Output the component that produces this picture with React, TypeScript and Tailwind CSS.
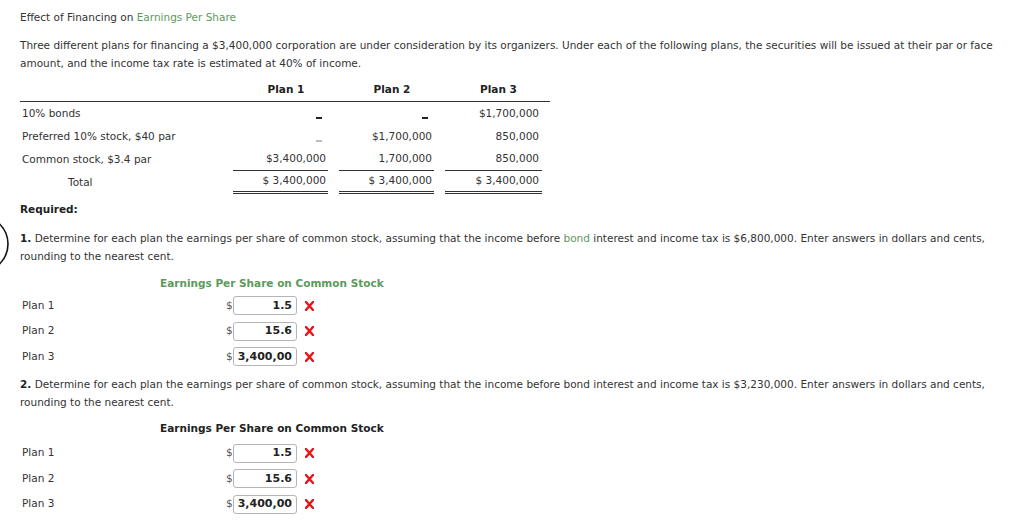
import type { ReactNode } from "react";

const green = "text-[#5c9a5c]";

function Dash({ light }: { light?: boolean }) {
   return (
      <span className={`inline-block w-[6px] h-[2px] mt-[8px] mr-[4px] ${light ? "bg-[#bbb]" : "bg-[#222]"}`} />
   );
}

function FinRow({
   label,
   cells,
   labelClass = "pl-[2px]",
   rowClass = "",
   cellClass = "",
}: {
   label: string;
   cells: ReactNode[];
   labelClass?: string;
   rowClass?: string;
   cellClass?: string;
}) {
   return (
      <div className={`flex h-[23px] items-center ${rowClass}`}>
         <div className={`w-[213px] ${labelClass}`}>{label}</div>
         <div className={`w-[95px] h-full flex items-center justify-end pr-[2px] ${cellClass}`}>{cells[0]}</div>
         <div className="w-[11px]" />
         <div className={`w-[95px] h-full flex items-center justify-end pr-[2px] ${cellClass}`}>{cells[1]}</div>
         <div className="w-[11px]" />
         <div className={`w-[97px] h-full flex items-center justify-end pr-[3px] ${cellClass}`}>{cells[2]}</div>
      </div>
   );
}

function XMark() {
   return (
      <svg width="9" height="10" viewBox="0 0 9 10" className="ml-[8px]">
         <path d="M1 1 L8 9 M8 1 L1 9" stroke="#e8161b" strokeWidth="2.4" strokeLinecap="square" />
      </svg>
   );
}

function EpsRow({ label, value }: { label: string; value: string }) {
   return (
      <div className="flex h-[25.5px] items-center">
         <div className="w-[206px] pl-[2px]">{label}</div>
         <span className="w-[7px] text-[#555]">$</span>
         <div className="w-[64px] h-[19px] border border-[#b5b5b5] rounded-[3px] bg-white flex items-center justify-end pr-[4px] text-[11px] font-bold text-[#222] overflow-hidden whitespace-nowrap">
            {value}
         </div>
         <XMark />
      </div>
   );
}

function EpsBlock({ headingClass, gap }: { headingClass: string; gap: string }) {
   return (
      <div>
         <div className={`leading-[18px] font-bold pl-[140px] ${headingClass}`}>
            Earnings Per Share on Common Stock
         </div>
         <div className={gap}>
            <EpsRow label="Plan 1" value="1.5" />
            <EpsRow label="Plan 2" value="15.6" />
            <EpsRow label="Plan 3" value="3,400,00" />
         </div>
      </div>
   );
}

export default function App() {
   return (
      <div className="relative w-[1024px] h-[524px] overflow-hidden bg-white text-[10.5px] text-[#333] font-['DejaVu_Sans',Verdana,sans-serif] pt-[8px] px-[20px]">
         <svg className="absolute left-0 top-[216px]" width="12" height="56" viewBox="0 0 12 56">
            <circle cx="-20" cy="28" r="28" fill="none" stroke="#111" strokeWidth="1.6" />
         </svg>

         <div className="leading-[18px]">
            Effect of Financing on <span className={green}>Earnings Per Share</span>
         </div>

         <p className="mt-[10px] leading-[18px]">
            Three different plans for financing a $3,400,000 corporation are under consideration by its organizers.
            Under each of the following plans, the securities will be issued at their par or face amount, and the income
            tax rate is estimated at 40% of income.
         </p>

         <div className="mt-[7px] w-[530px]">
            <FinRow
               label=""
               rowClass="border-b border-[#333] font-bold text-[#222]"
               cellClass="!justify-center pl-[13px]"
               cells={["Plan 1", "Plan 2", "Plan 3"]}
            />
            <FinRow label="10% bonds" cells={[<Dash />, <Dash />, "$1,700,000"]} />
            <FinRow label="Preferred 10% stock, $40 par" cells={[<Dash light />, "$1,700,000", "850,000"]} />
            <FinRow
               label="Common stock, $3.4 par"
               cellClass="border-b border-[#333]"
               cells={["$3,400,000", "1,700,000", "850,000"]}
            />
            <FinRow
               label="Total"
               labelClass="pl-[48px]"
               cellClass="border-b-[3px] border-double border-[#333]"
               cells={["$ 3,400,000", "$ 3,400,000", "$ 3,400,000"]}
            />
         </div>

         <div className="mt-[6px] leading-[18px] font-bold text-[#222]">Required:</div>

         <p className="mt-[11px] leading-[18px]">
            <span className="font-bold text-[#222]">1.</span> Determine for each plan the earnings per share of common
            stock, assuming that the income before <span className={green}>bond</span> interest and income tax is
            $6,800,000. Enter answers in dollars and cents, rounding to the nearest cent.
         </p>

         <div className="mt-[9px]">
            <EpsBlock headingClass="text-[#5c9a5c]" gap="mt-[1px]" />
         </div>

         <p className="mt-[5px] leading-[18px]">
            <span className="font-bold text-[#222]">2.</span> Determine for each plan the earnings per share of common
            stock, assuming that the income before bond interest and income tax is $3,230,000. Enter answers in dollars
            and cents, rounding to the nearest cent.
         </p>

         <div className="mt-[8px]">
            <EpsBlock headingClass="text-[#222]" gap="mt-[4px]" />
         </div>
      </div>
   );
}
